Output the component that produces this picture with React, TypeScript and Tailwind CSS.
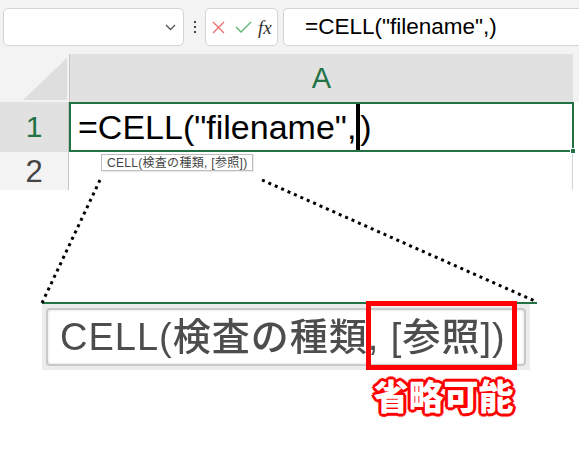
import React from "react";

const ui = '"Liberation Sans", "Noto Sans CJK JP", sans-serif';

export default function App() {
  return (
    <div className="relative w-[579px] h-[453px] overflow-hidden bg-white" style={{ fontFamily: ui }}>
      {/* Top formula bar */}
      <div className="flex h-[54px] items-start bg-[#f3f3f3] pt-[8px]">
        <div className="ml-[3px] flex h-[38px] w-[181px] items-center justify-end rounded-[5px] border border-[#d4d4d4] bg-white pr-[7px]">
          <svg width="11" height="7" viewBox="0 0 11 7">
            <path d="M1 1 L5.5 5.5 L10 1" fill="none" stroke="#555" strokeWidth="1.3" />
          </svg>
        </div>
        <div className="flex h-[38px] w-[21px] flex-col items-center justify-center gap-[3px]">
          <span className="h-[2px] w-[2px] bg-[#444]" />
          <span className="h-[2px] w-[2px] bg-[#444]" />
          <span className="h-[2px] w-[2px] bg-[#444]" />
        </div>
        <div className="flex h-[38px] w-[73px] items-center rounded-[5px] border border-[#d4d4d4] bg-white pl-[6px]">
          <svg width="13" height="13" viewBox="0 0 13 13">
            <path d="M1 1 L12 12 M12 1 L1 12" stroke="#ee6b6b" strokeWidth="1.3" />
          </svg>
          <svg className="ml-[10px]" width="17" height="12" viewBox="0 0 17 12">
            <path d="M1 6 L6 11 L16 1" fill="none" stroke="#5bb46f" strokeWidth="1.3" />
          </svg>
          <span
            className="ml-[6px] text-[19px] italic leading-none text-[#333]"
            style={{ fontFamily: '"Liberation Serif", serif' }}
          >
            fx
          </span>
        </div>
        <div className="ml-[5px] flex h-[38px] flex-1 items-center rounded-l-[5px] border border-r-0 border-[#d4d4d4] bg-white pl-[21px]">
          <span className="text-[22.5px] leading-none text-black">=CELL("filename",)</span>
        </div>
      </div>

      {/* Grid */}
      <div className="flex flex-col">
        <div className="flex h-[48px]">
          <div className="relative w-[69px] bg-[#f3f3f3]">
            <svg className="absolute bottom-[2px] right-[2px]" width="44" height="42" viewBox="0 0 44 42">
              <path d="M44 0 L44 42 L0 42 Z" fill="#dedede" />
            </svg>
          </div>
          <div className="flex w-[504px] items-center justify-center border-l border-[#c6c6c6] bg-[#e1e1e1]">
            <span className="text-[29px] leading-none text-[#217346]">A</span>
          </div>
          <div className="flex-1 bg-[#f3f3f3]" />
        </div>
        <div className="flex h-[50px]">
          <div className="flex w-[69px] items-center justify-center bg-[#e1e1e1] border-r border-[#c6c6c6]">
            <span className="text-[30px] leading-none text-[#217346]">1</span>
          </div>
          <div className="relative flex w-[505px] items-center border-2 border-[#217346] bg-white pl-[7px]">
            <span className="text-[34px] leading-none text-black whitespace-nowrap">
              =CELL("filename",
            </span>
            <span className="h-[46px] w-[4px] bg-black" />
            <span className="text-[34px] leading-none text-black">)</span>
            <span className="absolute bottom-[-4px] right-[-4px] h-[6px] w-[6px] border border-white bg-[#217346]" />
            {/* tooltip */}
            <div className="absolute left-[30px] top-[50px] flex h-[17px] w-[152px] items-center border border-[#bdbdbd] bg-white px-[5px] shadow-[1px_1px_1px_rgba(0,0,0,0.08)]">
              <span className="text-[12px] tracking-[0.3px] leading-none text-[#444] whitespace-nowrap">CELL(検査の種類, [参照])</span>
            </div>
          </div>
          <div className="flex-1 bg-white" />
        </div>
        <div className="flex h-[38px]">
          <div className="flex w-[69px] items-center justify-center border-r border-[#c6c6c6] bg-[#f3f3f3]">
            <span className="text-[31px] leading-none text-[#444]">2</span>
          </div>
          <div className="w-[504px] border-r border-[#d4d4d4] bg-white" />
          <div className="flex-1 bg-white" />
        </div>
      </div>

      {/* Magnified callout */}
      <div className="relative ml-[42px] mt-[112px] w-[495px]">
        <div className="h-[2px] w-full bg-[#217346]" />
        <div className="h-[66px] w-[488px] bg-[#ececec] p-[4px]">
          <div className="flex h-full w-full items-center rounded-[4px] border-2 border-[#c9c9c9] bg-white pl-[12px] shadow-[inset_0_0_3px_rgba(0,0,0,0.15)]">
            <span className="whitespace-nowrap text-[38px] font-medium leading-none tracking-[1px] text-[#4d4d4d] blur-[0.7px]">
              CELL(検査の種類, [参照])
            </span>
          </div>
        </div>
        <div className="absolute left-[324px] top-[-1px] h-[69px] w-[151px] border-[5px] border-[#ff0000]" />
        <div className="ml-[328px] mt-[7px] flex w-[147px] justify-center">
          <span
            className="text-[35px] font-black leading-none text-white [text-shadow:3px_0_0_#f00,-3px_0_0_#f00,0_3px_0_#f00,0_-3px_0_#f00,2px_2px_0_#f00,-2px_2px_0_#f00,2px_-2px_0_#f00,-2px_-2px_0_#f00,0_0_4px_#f00]"
            style={{ fontFamily: '"Noto Sans CJK JP", sans-serif' }}
          >
            省略可能
          </span>
        </div>
      </div>

      {/* Dotted zoom lines */}
      <svg className="pointer-events-none absolute left-0 top-0" width="579" height="453" viewBox="0 0 579 453">
        <path d="M100 180 L42 303" stroke="#000" strokeWidth="3" strokeDasharray="3 4" fill="none" />
        <path d="M262 180 L537 302" stroke="#000" strokeWidth="3" strokeDasharray="3 4" fill="none" />
      </svg>
    </div>
  );
}
